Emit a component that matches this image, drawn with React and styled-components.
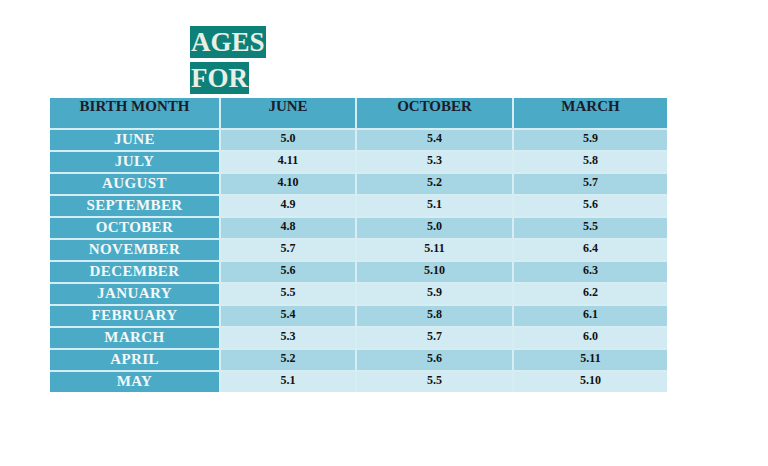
import React from "react";
import styled, { createGlobalStyle } from "styled-components";

const Global = createGlobalStyle`
  html, body { margin: 0; padding: 0; background: #ffffff; }
  body { font-family: "Liberation Serif", "Times New Roman", serif; }
`;

const Page = styled.div`
  width: 768px;
  height: 466px;
  padding: 26px 0 0 50px;
  box-sizing: border-box;
  display: flex;
  flex-direction: column;
  align-items: flex-start;
`;

const TitleBlock = styled.div`
  margin-left: 140px;
  display: flex;
  flex-direction: column;
  align-items: flex-start;
  gap: 4px;
  margin-bottom: 4px;
`;

const TitleWord = styled.div`
  background: #0e807a;
  color: #e8f0e6;
  font-family: "Liberation Serif", "Times New Roman", serif;
  font-weight: 700;
  font-size: 27px;
  line-height: 32px;
  height: 32px;
  padding: 0 1px;
`;

const Table = styled.div`
  display: grid;
  grid-template-columns: 169px 134px 155px 153px;
  grid-template-rows: 30px repeat(12, 20px);
  gap: 2px;
  background: #d6edf4;
`;

const HeadCell = styled.div`
  background: #4babc6;
  color: #1c1c2c;
  font-weight: 700;
  font-size: 15px;
  line-height: 17px;
  text-align: center;
`;

const LabelCell = styled.div`
  background: #4babc6;
  color: #f4f8f8;
  font-weight: 700;
  font-size: 15px;
  letter-spacing: 0.4px;
  line-height: 18px;
  text-align: center;
`;

const DataCell = styled.div`
  background: ${(p) => (p.$odd ? "#a6d5e3" : "#d2eaf2")};
  color: #111111;
  font-weight: 700;
  font-size: 12px;
  line-height: 17px;
  text-align: center;
`;

const headers = ["BIRTH MONTH", "JUNE", "OCTOBER", "MARCH"];

const rows = [
  ["JUNE", "5.0", "5.4", "5.9"],
  ["JULY", "4.11", "5.3", "5.8"],
  ["AUGUST", "4.10", "5.2", "5.7"],
  ["SEPTEMBER", "4.9", "5.1", "5.6"],
  ["OCTOBER", "4.8", "5.0", "5.5"],
  ["NOVEMBER", "5.7", "5.11", "6.4"],
  ["DECEMBER", "5.6", "5.10", "6.3"],
  ["JANUARY", "5.5", "5.9", "6.2"],
  ["FEBRUARY", "5.4", "5.8", "6.1"],
  ["MARCH", "5.3", "5.7", "6.0"],
  ["APRIL", "5.2", "5.6", "5.11"],
  ["MAY", "5.1", "5.5", "5.10"],
];

export default function App() {
  return (
    <>
      <Global />
      <Page>
        <TitleBlock>
          <TitleWord>AGES</TitleWord>
          <TitleWord>FOR</TitleWord>
        </TitleBlock>
        <Table>
          {headers.map((h) => (
            <HeadCell key={h}>{h}</HeadCell>
          ))}
          {rows.map((r, i) => (
            <React.Fragment key={r[0]}>
              <LabelCell>{r[0]}</LabelCell>
              {r.slice(1).map((v, j) => (
                <DataCell key={j} $odd={i % 2 === 0}>
                  {v}
                </DataCell>
              ))}
            </React.Fragment>
          ))}
        </Table>
      </Page>
    </>
  );
}
